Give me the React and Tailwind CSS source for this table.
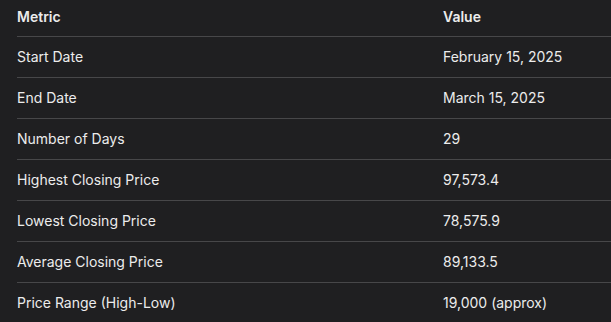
import React from 'react'

const rows = [
  ['Start Date', 'February 15, 2025'],
  ['End Date', 'March 15, 2025'],
  ['Number of Days', '29'],
  ['Highest Closing Price', '97,573.4'],
  ['Lowest Closing Price', '78,575.9'],
  ['Average Closing Price', '89,133.5'],
  ['Price Range (High-Low)', '19,000 (approx)'],
]

export default function App() {
  return (
    <div
      className="w-[611px] h-[322px] overflow-hidden bg-[#1f1f21] text-[#ececec] text-[14px] leading-5 pl-[17px]"
      style={{ fontFamily: 'Inter, "Noto Sans", sans-serif' }}
    >
      <div className="grid grid-cols-[426px_1fr] h-[36px] items-center pb-[3px] font-semibold">
        <div>Metric</div>
        <div>Value</div>
      </div>
      {rows.map(([k, v]) => (
        <div key={k} className="grid grid-cols-[426px_1fr] h-[41px] items-center border-t border-[#474749]">
          <div>{k}</div>
          <div>{v}</div>
        </div>
      ))}
    </div>
  )
}
